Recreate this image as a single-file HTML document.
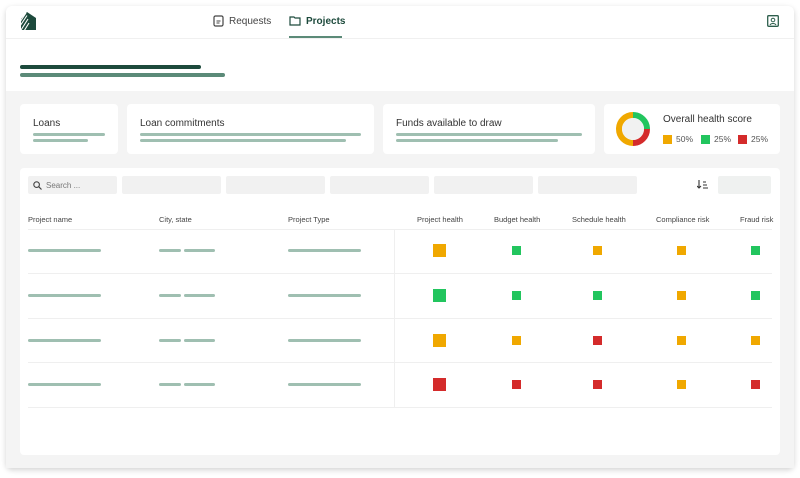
<!DOCTYPE html><html><head><style>
*{margin:0;padding:0;box-sizing:border-box}
body{width:800px;height:478px;background:#fff;font-family:"Liberation Sans",sans-serif;position:relative;overflow:hidden}
.a{position:absolute}
.frame{left:6px;top:6px;width:788px;height:462px;background:#fff;border-radius:6px;box-shadow:0 2px 6px rgba(0,0,0,.18);overflow:hidden}
.bar{position:absolute;height:4px;border-radius:2px;background:#9fbfb1}
.card{position:absolute;background:#fff;border-radius:4px}
.t{position:absolute;font-size:10px;color:#333}
.h{position:absolute;font-size:7.5px;color:#444;top:215px}
.f{position:absolute;top:176px;height:18px;background:#f1f1f1;border-radius:2px}
.sq{position:absolute;width:9px;height:9px}
.SQ{position:absolute;width:13px;height:13px}
.o{background:#f0a800}.g{background:#22c55e}.r{background:#d42b2b}
.line{position:absolute;left:28px;width:744px;height:1px;background:#efefef}
</style></head><body>
<div class="a frame"></div>
<svg class="a" style="left:20px;top:12px" width="17" height="18" viewBox="0 0 17 18"><path d="M7 0L16 6V18H1V7Z" fill="#1d4a3c"/><g stroke="#fff" stroke-width="1.1"><path d="M0 10L6 1M0 14L7 3.5M1 18L8 7M4 19L9 11"/></g></svg>
<svg class="a" style="left:213px;top:15px" width="11" height="12"><rect x="1" y="1" width="9" height="10" rx="1.5" fill="none" stroke="#444" stroke-width="1.2"/><path d="M3.5 6h4M3.5 8h3" stroke="#444"/></svg>
<div class="t" style="left:229px;top:16px;font-size:10px;color:#444">Requests</div>
<svg class="a" style="left:289px;top:15px" width="12" height="11"><path d="M1 2h4l1 1h5v7H1z" fill="none" stroke="#1d4a3c" stroke-width="1.2"/></svg>
<div class="t" style="left:306px;top:16px;font-size:10px;color:#1d4a3c;font-weight:bold">Projects</div>
<div class="a" style="left:289px;top:36px;width:53px;height:2px;background:#5b8a78"></div>
<div class="a" style="left:6px;top:38px;width:788px;height:1px;background:#f0f0f0"></div>
<svg class="a" style="left:767px;top:15px" width="12" height="12"><rect x=".7" y=".7" width="10.6" height="10.6" rx="1" fill="none" stroke="#2d5e4c" stroke-width="1.3"/><circle cx="6" cy="5" r="1.8" fill="none" stroke="#2d5e4c"/><path d="M3 10c1-2 5-2 6 0" fill="none" stroke="#2d5e4c"/></svg>
<div class="a" style="left:20px;top:65px;width:181px;height:4px;border-radius:2px;background:#1d4a3c"></div>
<div class="a" style="left:20px;top:73px;width:205px;height:4px;border-radius:2px;background:#5b8a78"></div>
<div class="a" style="left:6px;top:91px;width:788px;height:377px;background:#f4f4f4"></div>
<div class="card" style="left:20px;top:104px;width:98px;height:50px"></div>
<div class="t" style="left:33px;top:118px">Loans</div>
<div class="bar" style="left:33px;top:133px;width:72px;height:3px"></div><div class="bar" style="left:33px;top:139px;width:55px;height:3px"></div>
<div class="card" style="left:127px;top:104px;width:247px;height:50px"></div>
<div class="t" style="left:140px;top:118px">Loan commitments</div>
<div class="bar" style="left:140px;top:133px;width:221px;height:3px"></div><div class="bar" style="left:140px;top:139px;width:206px;height:3px"></div>
<div class="card" style="left:383px;top:104px;width:212px;height:50px"></div>
<div class="t" style="left:396px;top:118px">Funds available to draw</div>
<div class="bar" style="left:396px;top:133px;width:186px;height:3px"></div><div class="bar" style="left:396px;top:139px;width:162px;height:3px"></div>
<div class="card" style="left:604px;top:104px;width:176px;height:50px"></div>
<svg class="a" style="left:616px;top:112px" width="34" height="34" viewBox="0 0 34 34"><g fill="none" stroke-width="6"><path d="M17 3A14 14 0 0 0 17 31" stroke="#f0a800"/><path d="M17 3A14 14 0 0 1 31 17" stroke="#22c55e"/><path d="M31 17A14 14 0 0 1 17 31" stroke="#d42b2b"/></g><circle cx="17" cy="17" r="11" fill="#f1f1f1"/></svg>
<div class="t" style="left:663px;top:114px">Overall health score</div>
<div class="sq o" style="left:663px;top:135px"></div><div class="t" style="left:676px;top:134px;font-size:8.5px;color:#555">50%</div>
<div class="sq g" style="left:701px;top:135px"></div><div class="t" style="left:714px;top:134px;font-size:8.5px;color:#555">25%</div>
<div class="sq r" style="left:738px;top:135px"></div><div class="t" style="left:751px;top:134px;font-size:8.5px;color:#555">25%</div>
<div class="card" style="left:20px;top:168px;width:760px;height:287px"></div>
<div class="f" style="left:28px;width:89px"></div>
<svg class="a" style="left:33px;top:181px" width="9" height="9"><circle cx="3.6" cy="3.6" r="2.8" fill="none" stroke="#444" stroke-width="1.1"/><path d="M5.6 5.6L8.5 8.5" stroke="#444" stroke-width="1.2"/></svg>
<div class="t" style="left:46px;top:181px;font-size:8px;color:#777">Search ...</div>
<div class="f" style="left:122px;width:99px"></div><div class="f" style="left:226px;width:99px"></div><div class="f" style="left:330px;width:99px"></div><div class="f" style="left:434px;width:99px"></div><div class="f" style="left:538px;width:99px"></div>
<div class="f" style="left:718px;width:53px;background:#eff1f0"></div>
<svg class="a" style="left:697px;top:179px" width="12" height="11"><path d="M2 1v8M0 7l2 2 2-2" fill="none" stroke="#333" stroke-width="1.1"/><path d="M6 3h3M6 6h4M6 9h5" stroke="#333"/></svg>
<div class="h" style="left:28px">Project name</div><div class="h" style="left:159px">City, state</div><div class="h" style="left:288px">Project Type</div>
<div class="h" style="left:417px">Project health</div><div class="h" style="left:494px">Budget health</div><div class="h" style="left:572px">Schedule health</div><div class="h" style="left:656px">Compliance risk</div><div class="h" style="left:740px">Fraud risk</div>
<div class="line" style="top:229px"></div><div class="line" style="top:273px"></div><div class="line" style="top:318px"></div><div class="line" style="top:362px"></div><div class="line" style="top:407px"></div>
<div class="a" style="left:394px;top:229px;width:1px;height:178px;background:#efefef"></div>
<div id="rows"></div>
<script>
var ys=[250,295,340,384],c=[['o','g','o','o','g'],['g','g','g','o','g'],['o','o','r','o','o'],['r','r','r','o','r']],xs=[439,516,597,681,755],h='';
ys.forEach(function(y,i){h+='<div class="bar" style="left:28px;top:'+(y-1.5)+'px;width:73px;height:3px"></div><div class="bar" style="left:159px;top:'+(y-1.5)+'px;width:22px;height:3px"></div><div class="bar" style="left:184px;top:'+(y-1.5)+'px;width:31px;height:3px"></div><div class="bar" style="left:288px;top:'+(y-1.5)+'px;width:73px;height:3px"></div>';
c[i].forEach(function(k,j){var s=j==0?13:9;h+='<div class="'+(j==0?'SQ':'sq')+' '+k+'" style="left:'+(xs[j]-s/2)+'px;top:'+(y-s/2)+'px"></div>';});});
document.getElementById('rows').innerHTML=h;
</script>
</body></html>
